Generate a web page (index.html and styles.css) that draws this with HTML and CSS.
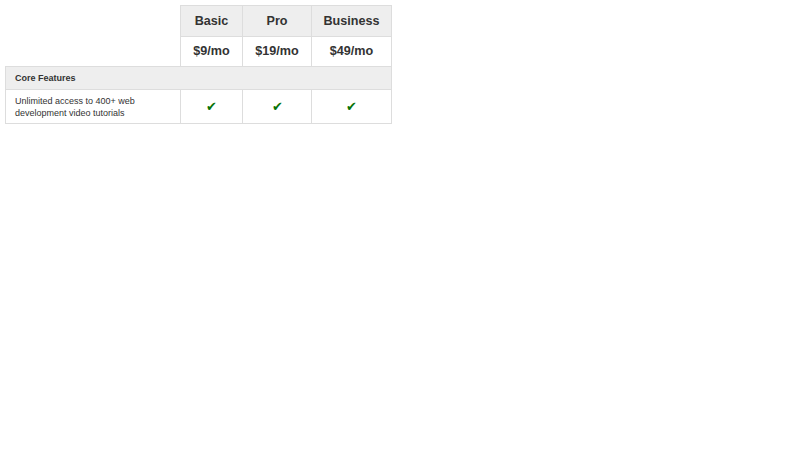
FILE: index.html
```html
<!DOCTYPE html>
<html>
<head>
<meta charset="utf-8">
<link rel="stylesheet" href="styles.css">
</head>
<body>
<table class="pricing">
  <colgroup>
    <col class="col-feature">
    <col class="col-basic">
    <col class="col-pro">
    <col class="col-business">
  </colgroup>
  <thead>
    <tr class="row-plan">
      <th class="blank"></th>
      <th class="plan">Basic</th>
      <th class="plan">Pro</th>
      <th class="plan">Business</th>
    </tr>
    <tr class="row-price">
      <th class="blank"></th>
      <td class="price">$9/mo</td>
      <td class="price">$19/mo</td>
      <td class="price">$49/mo</td>
    </tr>
  </thead>
  <tbody>
    <tr class="row-section">
      <td class="section" colspan="4">Core Features</td>
    </tr>
    <tr class="row-feature">
      <td class="feature">Unlimited access to 400+ web development video tutorials</td>
      <td class="check">✔</td>
      <td class="check">✔</td>
      <td class="check">✔</td>
    </tr>
  </tbody>
</table>
</body>
</html>
```

FILE: styles.css
```css
body {
  margin: 5px;
  font-family: "Liberation Sans", Arial, sans-serif;
  color: #333;
  background: #fff;
}
.pricing {
  border-collapse: collapse;
  table-layout: fixed;
  width: 386px;
}
.col-feature { width: 175px; }
.col-basic { width: 62px; }
.col-pro { width: 69px; }
.col-business { width: 80px; }
.pricing th, .pricing td {
  border: 1px solid #ddd;
  padding: 0 9px;
  vertical-align: middle;
}
.pricing .blank {
  border: none;
}
.row-plan { height: 31px; }
.row-price { height: 30px; }
.row-section { height: 23px; }
.row-feature { height: 34px; }
.plan {
  background: #eee;
  font-size: 12.6px;
  font-weight: bold;
  line-height: 15px;
  text-align: center;
}
.price {
  font-size: 12.6px;
  font-weight: bold;
  line-height: 15px;
  text-align: center;
}
.section {
  background: #eee;
  font-size: 9px;
  font-weight: bold;
  line-height: 12px;
  text-align: left;
}
.feature {
  font-size: 9px;
  line-height: 12px;
}
.check {
  color: #067306;
  font-size: 13px;
  text-align: center;
}
```
